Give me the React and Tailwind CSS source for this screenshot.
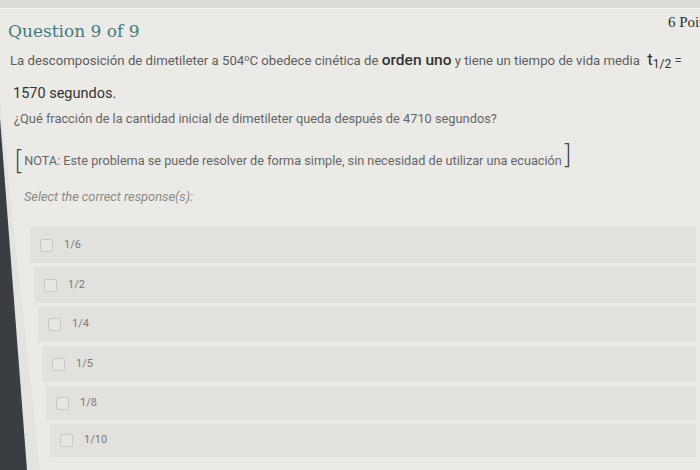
import React from "react";

const options = [
  { label: "1/6", ml: "ml-[30px]", h: "h-[36px]" },
  { label: "1/2", ml: "ml-[34px]", h: "h-[36px]" },
  { label: "1/4", ml: "ml-[38px]", h: "h-[35px]" },
  { label: "1/5", ml: "ml-[42px]", h: "h-[36px]" },
  { label: "1/8", ml: "ml-[46px]", h: "h-[34px]" },
  { label: "1/10", ml: "ml-[50px]", h: "h-[33px]" },
];

function Option({ label, ml, h }) {
  return (
    <div className={`${ml} ${h} mr-[4px] flex items-center gap-[11px] bg-[#e2e1dd] pl-[10px]`}>
      <span className="w-[13px] h-[13px] rounded-[2px] border border-[#c9c8c3] bg-[#e6e5e1]" />
      <span className="text-[11px] text-[#7a7a78]">{label}</span>
    </div>
  );
}

export default function App() {
  return (
    <div className="relative w-[700px] h-[470px] overflow-hidden bg-[#ebeae6] font-['Roboto',sans-serif]">
      <div className="h-[9px] bg-[#dedcd8] border-b border-[#f4f3ef]" />

      <div className="flex items-start">
        <h1 className="w-[668px] shrink-0 pl-[8px] pt-[11px] text-[17px] leading-[22px] text-[#3f7c80] font-['DejaVu_Serif',serif]">
          Question 9 of 9
        </h1>
        <span className="pt-[2px] whitespace-nowrap text-[15px] text-[#2f2f2f] font-['Liberation_Serif',serif]">
          6 Points
        </span>
      </div>

      <p className="mt-[7px] pl-[10px] whitespace-nowrap text-[13.2px] leading-[20px] text-[#5e5e5e]">
        La descomposición de dimetileter a 504<sup className="text-[9px]">o</sup>C obedece cinética de{" "}
        <span className="text-[15.5px] font-medium text-[#333]">orden uno</span> y tiene un tiempo de vida media{" "}
        <span className="ml-1 text-[17px] text-[#333]">
          t<sub className="text-[12px]">1/2</sub>
        </span>{" "}
        <span className="text-[#444]">=</span>
      </p>
      <p className="mt-[14px] pl-[13px] text-[14.5px] leading-[18px] text-[#333]">1570 segundos.</p>

      <p className="mt-[7px] pl-[14px] text-[12.8px] leading-[18px] text-[#666]">
        ¿Qué fracción de la cantidad inicial de dimetileter queda después de 4710 segundos?
      </p>

      <div className="mt-[19px] pl-[14px] flex items-end text-[12.7px] text-[#666]">
        <span className="text-[26px] leading-[26px] font-light text-[#444] font-['DejaVu_Sans',sans-serif]">[</span>
        <span className="pb-[3px]">NOTA: Este problema se puede resolver de forma simple, sin necesidad de utilizar una ecuación</span>
        <span className="text-[26px] leading-[26px] font-light text-[#444] font-['DejaVu_Sans',sans-serif] -translate-y-[6px]">]</span>
      </div>

      <p className="mt-[14px] pl-[24px] text-[12.8px] italic text-[#8a8a88]">Select the correct response(s):</p>

      <div className="mt-[21px] flex flex-col gap-[4px]">
        {options.map((o) => (
          <Option key={o.label} {...o} />
        ))}
      </div>

      <svg className="absolute left-0 top-0 pointer-events-none" width="700" height="470">
        <polygon points="0,100 40,470 27,470 0,118" fill="#d7d6d1" opacity="0.35" />
        <polygon points="0,118 27,470 0,470" fill="#3a3e43" />
      </svg>
    </div>
  );
}
